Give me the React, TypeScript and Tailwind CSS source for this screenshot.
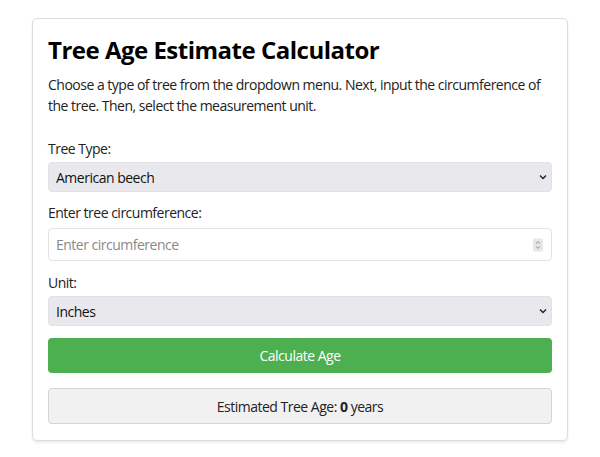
import React from "react";

function Chevron() {
  return (
    <svg width="8" height="6" viewBox="0 0 8 6" className="pointer-events-none absolute right-[5px] top-1/2 -translate-y-1/2">
      <path d="M1 1.5 L4 4.5 L7 1.5" fill="none" stroke="#222" strokeWidth="1.4" />
    </svg>
  );
}

export default function App() {
  return (
    <div className="min-h-[457px] bg-white pt-[18px] tracking-[-0.5px]" style={{ fontFamily: '"Open Sans", sans-serif' }}>
      <div className="mx-auto w-[536px] rounded-[5px] border border-[#dcdcdc] bg-white px-[15px] pb-[16px] pt-[17px] shadow-[0_2px_3px_rgba(0,0,0,0.08)]">
        <h2 className="text-[24px] font-bold leading-[28px] text-black">Tree Age Estimate Calculator</h2>
        <p className="mt-[10px] text-[14px] leading-[21px] text-[#222]">
          Choose a type of tree from the dropdown menu. Next, input the circumference of the tree. Then, select the measurement unit.
        </p>

        <label className="mt-[22px] block text-[14px] leading-[21px] text-[#222]">Tree Type:</label>
        <div className="relative mt-[3px]">
          <select className="block h-[30px] w-full appearance-none rounded-[4px] border border-[#e2e2e6] bg-[#e9e9ed] pl-[7px] text-[14px] tracking-[-0.5px] text-[#111] outline-none">
            <option>American beech</option>
          </select>
          <Chevron />
        </div>

        <label className="mt-[10px] block text-[14px] leading-[21px] text-[#222]">Enter tree circumference:</label>
        <div className="relative mt-[5px]">
          <input
            type="text"
            placeholder="Enter circumference"
            className="block h-[33px] w-full rounded-[4px] border border-[#e3e3e3] bg-white pl-[7px] text-[14px] tracking-[-0.5px] text-[#111] outline-none placeholder:text-[#8a8a8a]"
          />
          <div className="pointer-events-none absolute right-[9px] top-1/2 flex h-[13px] w-[10px] -translate-y-1/2 items-center justify-center rounded-[2px] bg-[#e6e6e6]">
            <svg width="6" height="9" viewBox="0 0 6 9">
              <path d="M1 3 L3 1.2 L5 3 M1 6 L3 7.8 L5 6" fill="none" stroke="#888" strokeWidth="0.9" />
            </svg>
          </div>
        </div>

        <label className="mt-[11px] block text-[14px] leading-[21px] text-[#222]">Unit:</label>
        <div className="relative mt-[3px]">
          <select className="block h-[30px] w-full appearance-none rounded-[4px] border border-[#e2e2e6] bg-[#e9e9ed] pl-[7px] text-[14px] tracking-[-0.5px] text-[#111] outline-none">
            <option>Inches</option>
          </select>
          <Chevron />
        </div>

        <button className="mt-[12px] block h-[35px] w-full rounded-[4px] bg-[#4caf50] text-[14px] tracking-[-0.5px] text-white">Calculate Age</button>

        <div className="mt-[15px] flex h-[36px] items-center justify-center rounded-[4px] border border-[#d4d4d4] bg-[#f1f1f1] text-[14px] text-[#222]">
          <span>
            Estimated Tree Age: <b className="font-bold">0</b> years
          </span>
        </div>
      </div>
    </div>
  );
}
